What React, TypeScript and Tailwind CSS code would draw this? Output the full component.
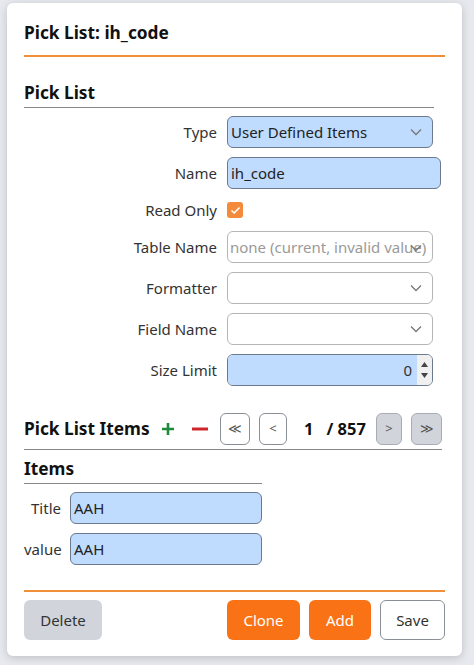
import React from "react";

function Chevron() {
  return (
    <svg width="12" height="8" viewBox="0 0 12 8" className="shrink-0">
      <path d="M1 1.5 L6 6.5 L11 1.5" fill="none" stroke="#777" strokeWidth="1.3" />
    </svg>
  );
}

function Row({ label, children }: { label: string; children: React.ReactNode }) {
  return (
    <div className="flex items-center">
      <div className="w-[193px] text-right text-[15px] leading-[20px] text-[#333]">{label}</div>
      <div className="ml-[10px] flex items-center">{children}</div>
    </div>
  );
}

function EmptySelect() {
  return (
    <div className="flex h-[32px] w-[206px] items-center justify-end rounded-[6px] border border-[#b5b5b5] bg-white pr-[10px]">
      <Chevron />
    </div>
  );
}

function PageBtn({ children, gray, w }: { children: React.ReactNode; gray?: boolean; w: string }) {
  return (
    <div
      className={
        "flex h-[32px] items-center justify-center rounded-[6px] border text-[13px] text-[#555] " +
        (gray ? "border-[#a8adb5] bg-[#d1d5db] " : "border-[#8a8f96] bg-white ") +
        w
      }
    >
      {children}
    </div>
  );
}

export default function App() {
  return (
    <div className="min-h-[665px] bg-[#e8e9ee] pl-[7px] pt-[3px] font-['Noto_Sans',sans-serif]">
      <div className="w-[455px] rounded-[6px] bg-white px-[17px] pb-[16px] pt-[18px] shadow-[0_2px_8px_rgba(0,0,0,0.18)]">
        <div className="text-[17.3px] font-bold leading-[24px] text-[#111]">Pick List: ih_code</div>
        <div className="mt-[10px] h-[2px] bg-[#f0903a]" />

        <div className="mt-[24px] w-[410px] border-b border-[#888] pb-[2px] text-[17.3px] font-bold leading-[24px] text-[#111]">
          Pick List
        </div>

        <div className="mt-[8px] flex flex-col gap-[9px]">
          <Row label="Type">
            <div className="flex h-[32px] w-[206px] items-center justify-between rounded-[6px] border border-[#6b7a8f] bg-[#bfdbfe] pl-[3px] pr-[10px] text-[15px] text-[#222]">
              <span>User Defined Items</span>
              <Chevron />
            </div>
          </Row>
          <Row label="Name">
            <div className="flex h-[32px] w-[214px] items-center rounded-[6px] border border-[#6b7a8f] bg-[#bfdbfe] pl-[3px] text-[15px] text-[#222]">
              ih_code
            </div>
          </Row>
          <div className="flex h-[24px] items-center">
            <div className="w-[193px] text-right text-[15px] leading-[20px] text-[#333]">Read Only</div>
            <div className="ml-[10px] flex h-[16px] w-[16px] items-center justify-center rounded-[3px] bg-[#f38a3c]">
              <svg width="11" height="9" viewBox="0 0 11 9">
                <path d="M1.5 4.5 L4.2 7 L9.5 1.5" fill="none" stroke="white" strokeWidth="1.6" />
              </svg>
            </div>
          </div>
          <Row label="Table Name">
            <div className="relative flex h-[32px] w-[206px] items-center overflow-hidden rounded-[6px] border border-[#b5b5b5] bg-white pl-[2px]">
              <span className="whitespace-nowrap text-[15px] text-[#9a9a9a]">none (current, invalid value)</span>
              <div className="absolute right-[10px] top-[12px]">
                <Chevron />
              </div>
            </div>
          </Row>
          <Row label="Formatter">
            <EmptySelect />
          </Row>
          <Row label="Field Name">
            <EmptySelect />
          </Row>
          <Row label="Size Limit">
            <div className="flex h-[32px] w-[206px] overflow-hidden rounded-[6px] border border-[#6b7a8f] bg-[#f2f2f2]">
              <div className="flex flex-1 items-center justify-end bg-[#bfdbfe] pr-[5px] text-[15px] text-[#333]">0</div>
              <div className="flex w-[15px] flex-col items-center justify-center gap-[6px] bg-[#f0f0f0]">
                <svg width="7" height="5" viewBox="0 0 7 5">
                  <path d="M0 5 L3.5 0 L7 5 Z" fill="#444" />
                </svg>
                <svg width="7" height="5" viewBox="0 0 7 5">
                  <path d="M0 0 L3.5 5 L7 0 Z" fill="#444" />
                </svg>
              </div>
            </div>
          </Row>
        </div>

        <div className="mt-[27px] flex w-[418px] items-center border-b border-[#888] pb-[4px]">
          <div className="w-[122px] shrink-0 whitespace-nowrap text-[17.3px] font-bold leading-[24px] text-[#111]">
            Pick List Items
          </div>
          <svg width="12" height="12" viewBox="0 0 12 12" className="ml-[16px] shrink-0">
            <path d="M6 0 V12 M0 6 H12" stroke="#1f8a3b" strokeWidth="2.6" />
          </svg>
          <svg width="16" height="4" viewBox="0 0 16 4" className="ml-[18px] shrink-0">
            <path d="M0 2 H16" stroke="#d0262b" strokeWidth="3" />
          </svg>
          <div className="ml-[12px] shrink-0">
            <PageBtn w="w-[30px]">≪</PageBtn>
          </div>
          <div className="ml-[9px] shrink-0">
            <PageBtn w="w-[28px]">&lt;</PageBtn>
          </div>
          <div className="flex w-[89px] shrink-0 items-center whitespace-nowrap text-[16.5px] font-bold text-[#111]">
            <span className="ml-[17px]">1</span>
            <span className="ml-[13px]">/ 857</span>
          </div>
          <div className="shrink-0">
            <PageBtn gray w="w-[26px]">&gt;</PageBtn>
          </div>
          <div className="ml-[9px] shrink-0">
            <PageBtn gray w="w-[31px]">≫</PageBtn>
          </div>
        </div>

        <div className="mt-[7px] w-[238px] border-b border-[#888] pb-[2px] text-[17.3px] font-bold leading-[24px] text-[#111]">
          Items
        </div>

        <div className="mt-[8px] flex flex-col gap-[9px]">
          {[
            ["Title", "AAH"],
            ["value", "AAH"],
          ].map(([l, v]) => (
            <div key={l} className="flex items-center">
              <div className="w-[37px] text-right text-[15px] text-[#333]">{l}</div>
              <div className="ml-[9px] flex h-[32px] w-[192px] items-center rounded-[6px] border border-[#6b7a8f] bg-[#bfdbfe] pl-[3px] text-[15px] text-[#222]">
                {v}
              </div>
            </div>
          ))}
        </div>

        <div className="mt-[25px] h-[2px] bg-[#f0903a]" />

        <div className="mt-[8px] flex items-center text-[15px]">
          <div className="flex h-[40px] w-[78px] items-center justify-center rounded-[6px] bg-[#d1d5db] text-[#333]">
            Delete
          </div>
          <div className="flex-1" />
          <div className="flex h-[40px] w-[73px] items-center justify-center rounded-[6px] bg-[#f97316] text-white">
            Clone
          </div>
          <div className="ml-[9px] flex h-[40px] w-[62px] items-center justify-center rounded-[6px] bg-[#f97316] text-white">
            Add
          </div>
          <div className="ml-[9px] flex h-[40px] w-[65px] items-center justify-center rounded-[6px] border border-[#8a8f96] bg-white text-[#333]">
            Save
          </div>
        </div>
      </div>
    </div>
  );
}
